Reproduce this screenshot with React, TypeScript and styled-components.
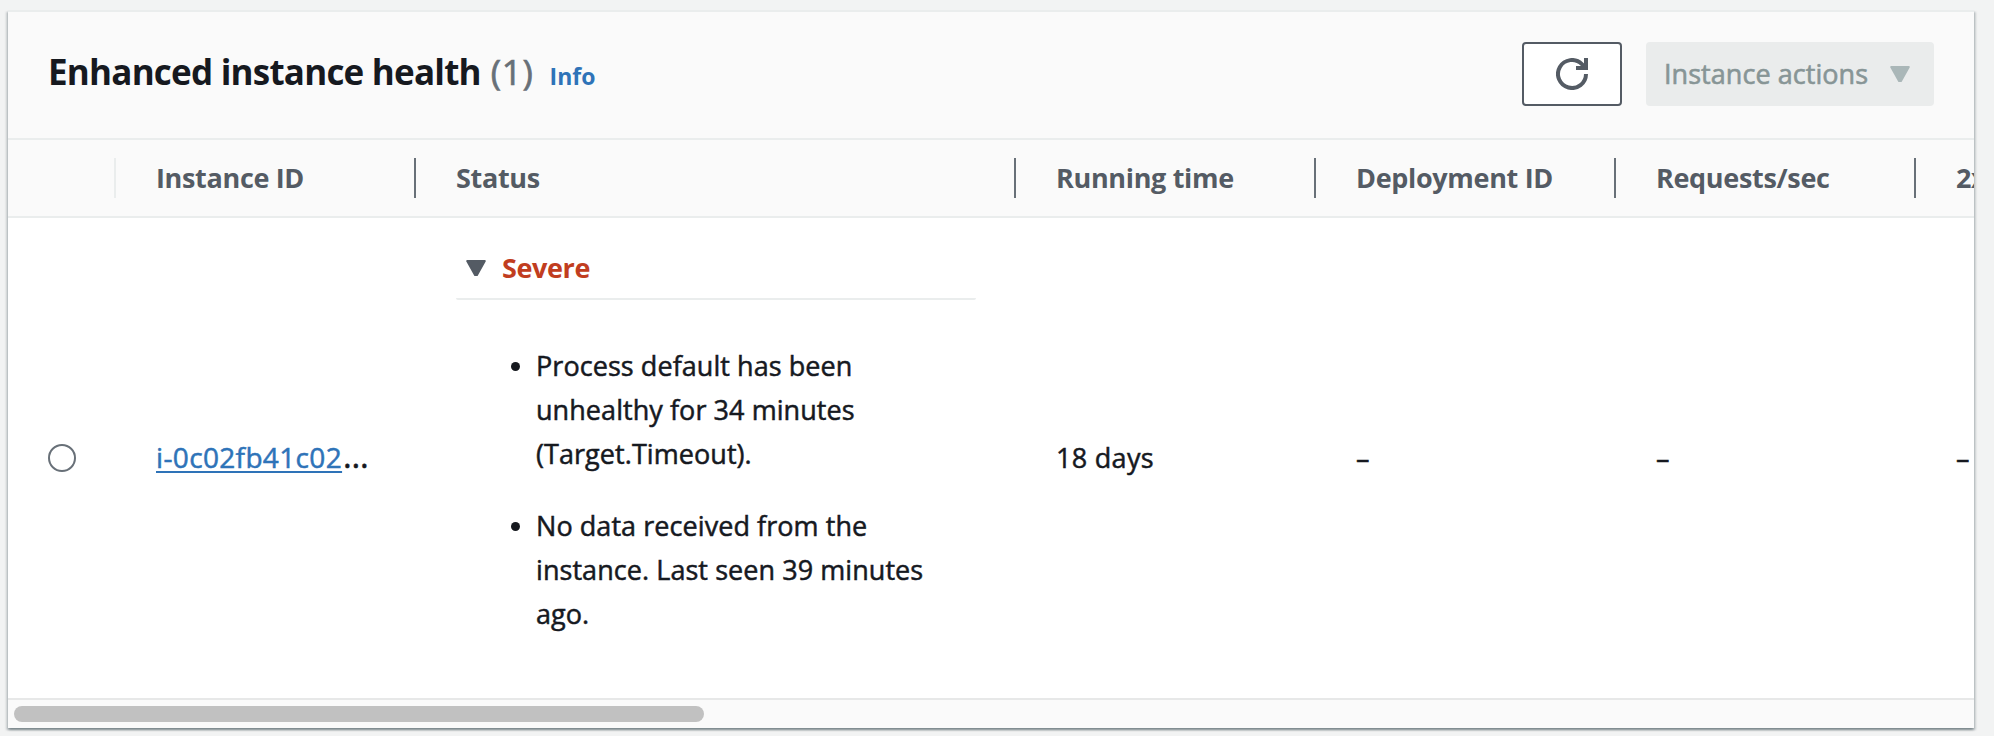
import React from 'react';
import styled, { createGlobalStyle } from 'styled-components';

const GlobalStyle = createGlobalStyle`
  *, *::before, *::after { box-sizing: border-box; }
  body {
    margin: 0;
    background: #f2f3f3;
    color: #16191f;
    font-family: "Open Sans", "Noto Sans", sans-serif;
    font-size: 27px;
    line-height: 44px;
    overflow: hidden;
  }
`;

const Page = styled.main`
  height: 736px;
  padding: 10px 20px 8px 8px;
`;

const Card = styled.section`
  height: 718px;
  display: flex;
  flex-direction: column;
  background: #ffffff;
  border-top: 2px solid #eaeded;
  border-bottom: 2px solid #eaeded;
  box-shadow: 0 2px 2px 0 rgba(0, 28, 36, 0.3), 2px 2px 2px 0 rgba(0, 28, 36, 0.15),
    -2px 2px 2px 0 rgba(0, 28, 36, 0.15);
`;

const CardHeader = styled.header`
  height: 128px;
  flex: none;
  display: flex;
  justify-content: space-between;
  align-items: flex-start;
  padding: 30px 40px 0;
  background: #fafafa;
  border-bottom: 2px solid #eaeded;
`;

const TitleGroup = styled.div`
  display: flex;
  align-items: baseline;
  padding-top: 8px;
`;

const Title = styled.h2`
  margin: 0;
  font-size: 35px;
  line-height: 44px;
  font-weight: 700;
  letter-spacing: -0.78px;
  white-space: nowrap;
`;

const Count = styled.span`
  margin-left: 10px;
  font-weight: 400;
  letter-spacing: 0.7px;
  color: #687078;
  -webkit-text-stroke: 0.7px currentColor;
`;

const InfoLink = styled.a`
  margin-left: 16px;
  font-size: 23px;
  font-weight: 700;
  color: #2e73b8;
`;

const Actions = styled.div`
  display: flex;
  gap: 24px;
`;

const Button = styled.button<{ $width: number; $muted?: boolean }>`
  width: ${({ $width }) => $width}px;
  height: 64px;
  padding: 0 16px;
  display: flex;
  align-items: center;
  justify-content: ${({ $muted }) => ($muted ? 'space-between' : 'center')};
  border: 2px solid ${({ $muted }) => ($muted ? '#eaecec' : '#545b64')};
  border-radius: 4px;
  background: ${({ $muted }) => ($muted ? '#eaecec' : '#ffffff')};
  color: ${({ $muted }) => ($muted ? '#879596' : '#545b64')};
  font: inherit;
  letter-spacing: 0.05px;
  -webkit-text-stroke: 0.6px currentColor;
`;

const CaretWrap = styled.span<{ $right?: number }>`
  display: flex;
  margin-right: ${({ $right = 0 }) => $right}px;
`;

const Grid = styled.div`
  flex: none;
  overflow: hidden;
`;

const columns = '108px 300px 600px 300px 300px 300px 300px';

const HeadRow = styled.div`
  display: grid;
  grid-template-columns: ${columns};
  width: max-content;
  height: 78px;
  padding: 18px 0;
  background: #fafafa;
  border-bottom: 2px solid #eaeded;
`;

const HeadCell = styled.div<{ $divider?: string }>`
  height: 40px;
  padding-left: 40px;
  border-right: 2px solid ${({ $divider = '#687078' }) => $divider};
  color: #545b64;
  font-weight: 700;
  line-height: 39px;
  letter-spacing: -0.33px;
  white-space: nowrap;
`;

const BodyRow = styled.div`
  display: grid;
  grid-template-columns: ${columns};
  width: max-content;
  height: 482px;
  border-bottom: 2px solid #e7e8e8;
`;

const Cell = styled.div`
  display: flex;
  align-items: center;
  padding: 0 40px;
  white-space: nowrap;
  letter-spacing: 0.3px;
  -webkit-text-stroke: 0.5px currentColor;
`;

const Radio = styled.span`
  flex: none;
  width: 28px;
  height: 28px;
  border: 2px solid #687078;
  border-radius: 50%;
`;

const InstanceText = styled.span`
  display: flex;
  align-items: baseline;
  padding-bottom: 2px;
`;

const InstanceLink = styled.a`
  color: #2e73b8;
  font-size: 28px;
  letter-spacing: 0.35px;
  text-decoration: underline;
  text-decoration-thickness: 2px;
  text-underline-offset: 3px;
  text-decoration-skip-ink: none;
`;

const Ellipsis = styled.span`
  margin-left: 1px;
  font-size: 33px;
  line-height: 1;
`;

const StatusCell = styled.div`
  padding: 28px 40px 0;
`;

const StatusToggle = styled.div`
  height: 54px;
  display: flex;
  gap: 16px;
  padding-left: 10px;
  border-bottom: 2px solid #eaeded;
  border-radius: 2px;
  color: #c13d20;
  font-weight: 700;
  letter-spacing: -0.4px;
`;

const ToggleCaret = styled.span`
  padding-top: 14px;
  line-height: 0;
`;

const Causes = styled.ul`
  list-style: none;
  margin: 44px 0 0;
  padding: 0 0 0 55px;
  display: flex;
  flex-direction: column;
  gap: 28px;
`;

const Cause = styled.li`
  display: flex;
  gap: 16px;
  white-space: nowrap;
  letter-spacing: 0.06px;
  -webkit-text-stroke: 0.5px currentColor;

  &::before {
    content: '';
    flex: none;
    width: 9px;
    height: 9px;
    margin-top: 18px;
    border-radius: 50%;
    background: #16191f;
  }
`;

const ScrollTrack = styled.div`
  flex: 1;
  padding: 6px;
  background: #fafafa;
`;

const ScrollThumb = styled.div`
  width: 690px;
  height: 16px;
  border-radius: 8px;
  background: #c1c1c1;
`;

const Caret = ({ color }: { color: string }) => (
  <svg width="20" height="16" viewBox="0 0 20 16" aria-hidden="true">
    <path d="M1.2 1h17.6L11 15H9Z" fill={color} stroke={color} strokeWidth="2" strokeLinejoin="round" />
  </svg>
);

const RefreshIcon = () => (
  <svg width="32" height="32" viewBox="0 0 32 32" fill="none" stroke="currentColor" strokeWidth="4" aria-hidden="true">
    <path d="M30 16a14 14 0 1 1-4.1-9.9L29 9.5" />
    <path d="M30 0v10H20" />
  </svg>
);

const headings = ['Instance ID', 'Status', 'Running time', 'Deployment ID', 'Requests/sec', '2xx'];

const causes = [
  ['Process default has been', 'unhealthy for 34 minutes', '(Target.Timeout).'],
  ['No data received from the', 'instance. Last seen 39 minutes', 'ago.'],
];

export default function App() {
  return (
    <>
      <GlobalStyle />
      <Page>
        <Card>
          <CardHeader>
            <TitleGroup>
              <Title>
                Enhanced instance health<Count>(1)</Count>
              </Title>
              <InfoLink>Info</InfoLink>
            </TitleGroup>
            <Actions>
              <Button $width={100} aria-label="Refresh">
                <RefreshIcon />
              </Button>
              <Button $width={288} $muted disabled>
                Instance actions
                <CaretWrap $right={6}>
                  <Caret color="#aab7b8" />
                </CaretWrap>
              </Button>
            </Actions>
          </CardHeader>
          <Grid>
            <HeadRow>
              <HeadCell $divider="#eaeded" />
              {headings.map((heading) => (
                <HeadCell key={heading}>{heading}</HeadCell>
              ))}
            </HeadRow>
            <BodyRow>
              <Cell>
                <Radio />
              </Cell>
              <Cell>
                <InstanceText>
                  <InstanceLink>i-0c02fb41c02</InstanceLink>
                  <Ellipsis>…</Ellipsis>
                </InstanceText>
              </Cell>
              <StatusCell>
                <StatusToggle>
                  <ToggleCaret>
                    <Caret color="#545b64" />
                  </ToggleCaret>
                  Severe
                </StatusToggle>
                <Causes>
                  {causes.map((lines) => (
                    <Cause key={lines[0]}>
                      <span>
                        {lines.map((line, i) => (
                          <React.Fragment key={line}>
                            {i > 0 && <br />}
                            {line}
                          </React.Fragment>
                        ))}
                      </span>
                    </Cause>
                  ))}
                </Causes>
              </StatusCell>
              <Cell>18 days</Cell>
              <Cell>–</Cell>
              <Cell>–</Cell>
              <Cell>–</Cell>
            </BodyRow>
          </Grid>
          <ScrollTrack>
            <ScrollThumb />
          </ScrollTrack>
        </Card>
      </Page>
    </>
  );
}
